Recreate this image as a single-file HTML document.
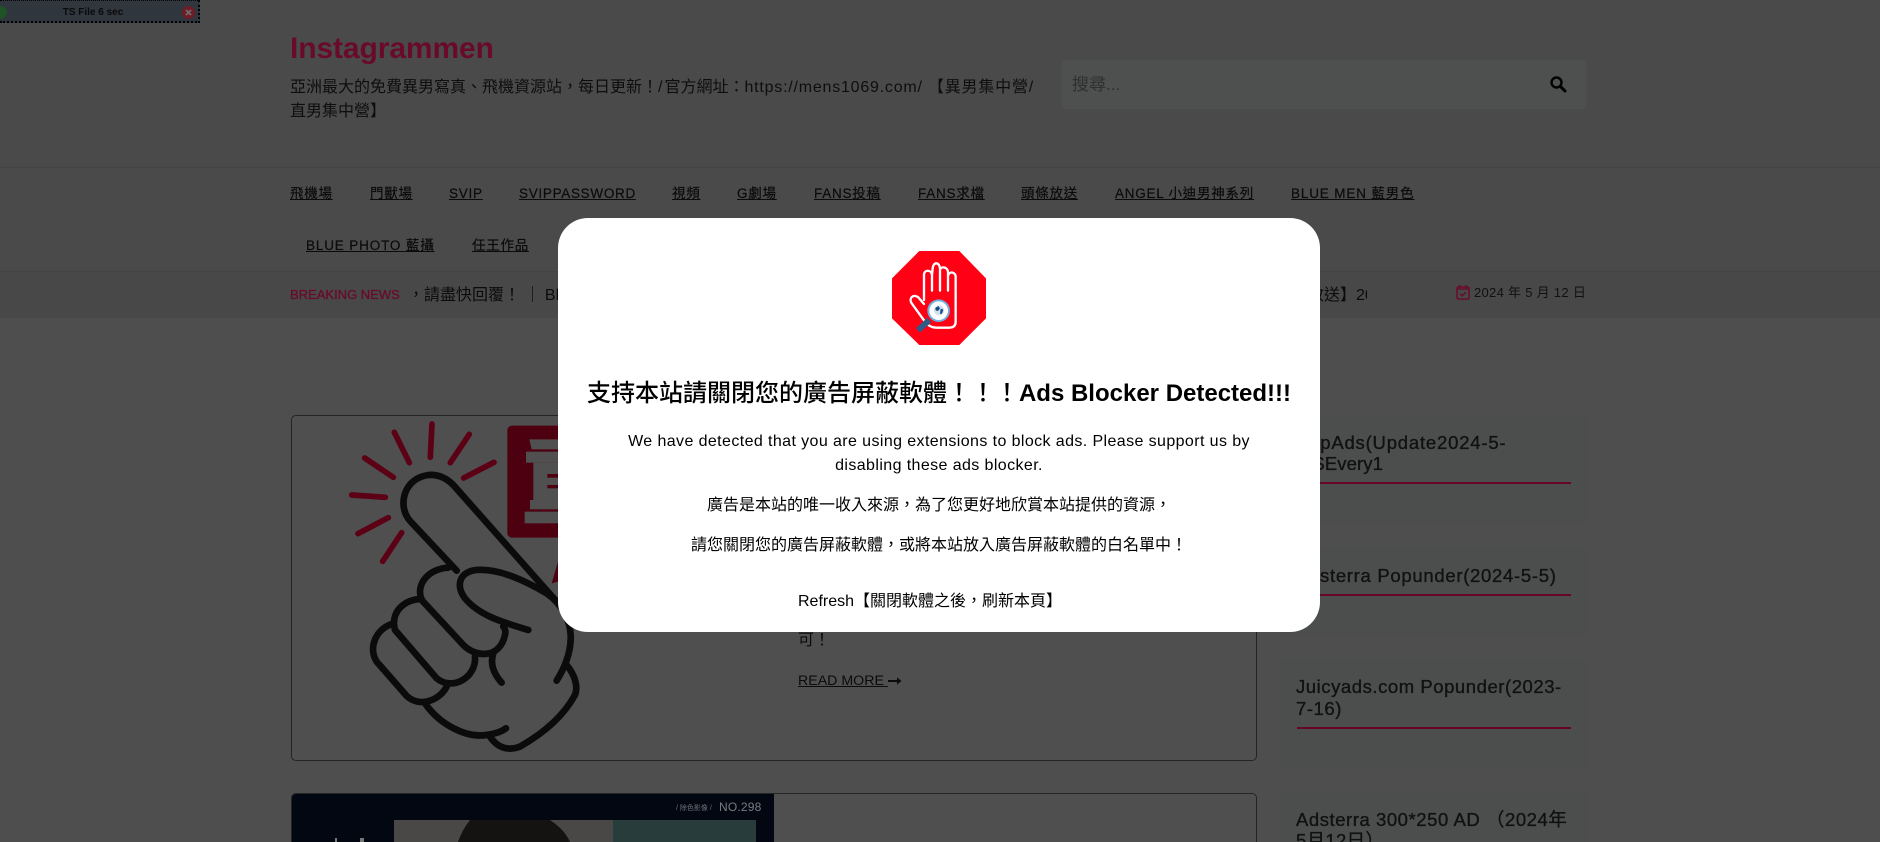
<!DOCTYPE html>
<html lang="zh-Hant"><head><meta charset="utf-8"><title>Instagrammen</title>
<style>
*{box-sizing:border-box}
html,body{margin:0;padding:0;width:1880px;height:842px;overflow:hidden;background:#4d4e4d}
body{position:relative;font-family:"Liberation Sans","Noto Sans CJK TC",sans-serif;color:#0b0b0b}
.a{position:absolute;white-space:nowrap}
.n{position:absolute;white-space:nowrap;font-size:13.5px;line-height:18px;letter-spacing:.75px;text-decoration:underline;color:#0b0b0b;-webkit-text-stroke:.2px #0b0b0b}
.w{position:absolute;background:#4c4e4d;left:1281px;width:306px}
.t{position:absolute;white-space:nowrap;font-size:18.5px;line-height:21px;color:#111;letter-spacing:.55px;-webkit-text-stroke:.35px #111}
.u{position:absolute;height:2px;background:#660524;left:1297px;width:274px}
#m{position:absolute;left:558px;top:218px;width:762px;height:414px;background:#fff;border-radius:30px;color:#000;text-align:center}
#m div{position:absolute;left:0;width:100%;white-space:nowrap;font-size:16px;line-height:24px}
</style></head><body>
<div class="a" style="left:0;top:0;width:1880px;height:167px;background:#4a4a4a"></div>
<div class="a" style="left:0;top:167px;width:1880px;height:104px;background:#4a4a4a;border-top:1px solid #444"></div>
<div class="a" style="left:0;top:271px;width:1880px;height:47px;background:#484848;border-top:1px solid #444"></div>

<div class="a" style="left:0;top:0;width:200px;height:23px;background:#30363d;border:2px dotted #000;border-width:1px 2px 2px 0;text-align:center;font-size:10px;font-weight:bold;line-height:23px;padding-right:12px;color:#0a0a0a">TS File 6 sec</div>
<div class="a" style="left:-7px;top:6px;width:14px;height:13px;border-radius:50%;background:#1f5227"></div>
<svg class="a" style="left:182px;top:6px" width="13" height="13" viewBox="0 0 13 13"><circle cx="6.5" cy="6.5" r="6.5" fill="#6e1c26"/><path d="M4 4l5 5M9 4l-5 5" stroke="#6d6d6d" stroke-width="1.8"/></svg>

<div class="a" style="left:290px;top:29px;font-size:30px;line-height:40px;font-weight:bold;color:#6a0a2b;letter-spacing:-.1px">Instagrammen</div>
<div class="a" style="left:290px;top:76px;font-size:16px;line-height:24px;color:#0e0e0e">亞洲最大的免費異男寫真、飛機資源站，每日更新！<span style="letter-spacing:2px">/</span>官方網址：<span style="letter-spacing:.78px">https://mens1069.com/ </span><span style="letter-spacing:.8px">【異男集中營/</span><br>直男集中營】</div>
<div class="a" style="left:1061px;top:60px;width:526px;height:49px;background:#4d504e;border-radius:5px"></div>
<div class="a" style="left:1072px;top:73px;font-size:17px;line-height:24px;color:#2f302f">搜尋...</div>
<svg class="a" style="left:1549px;top:75px" width="18" height="18" viewBox="0 0 18 18"><circle cx="7.5" cy="7.5" r="5" fill="none" stroke="#000" stroke-width="2.4"/><path d="M11.3 11.3L16 16" stroke="#000" stroke-width="3" stroke-linecap="round"/></svg>

<a class="n" style="left:290px;top:185px">飛機場</a>
<a class="n" style="left:370px;top:185px">門獸場</a>
<a class="n" style="left:449px;top:185px">SVIP</a>
<a class="n" style="left:519px;top:185px;letter-spacing:.7px">SVIPPASSWORD</a>
<a class="n" style="left:672px;top:185px">視頻</a>
<a class="n" style="left:737px;top:185px">G劇場</a>
<a class="n" style="left:814px;top:185px">FANS投稿</a>
<a class="n" style="left:918px;top:185px">FANS求檔</a>
<a class="n" style="left:1021px;top:185px">頭條放送</a>
<a class="n" style="left:1115px;top:185px">ANGEL 小迪男神系列</a>
<a class="n" style="left:1291px;top:185px;letter-spacing:.85px">BLUE MEN 藍男色</a>
<a class="n" style="left:306px;top:237px;letter-spacing:.85px">BLUE PHOTO 藍攝</a>
<a class="n" style="left:472px;top:237px">任王作品</a>

<div class="a" style="left:290px;top:286px;font-size:13px;line-height:18px;color:#6a0a2b;-webkit-text-stroke:.3px #6a0a2b">BREAKING NEWS</div>
<div class="a" style="left:408px;top:284px;font-size:16px;line-height:24px">，請盡快回覆！ ｜ Blue</div>
<div class="a" style="left:1320px;top:284px;width:47px;height:24px;overflow:hidden;font-size:16px;line-height:24px;text-indent:-12px">放送】2024</div>
<svg class="a" style="left:1456px;top:284px" width="14" height="16" viewBox="0 0 14 16"><rect x="1" y="3" width="12" height="12" rx="1.5" fill="none" stroke="#6a0a2b" stroke-width="1.5"/><path d="M1 5h12" stroke="#6a0a2b" stroke-width="1.4"/><path d="M4 1v3M10 1v3" stroke="#6a0a2b" stroke-width="1.6"/><path d="M4.2 9.8l2 2 3.6-3.6" fill="none" stroke="#6a0a2b" stroke-width="1.5"/></svg>
<div class="a" style="left:1474px;top:284px;font-size:13px;line-height:17px;letter-spacing:.3px;color:#111">2024 年 5 月 12 日</div>

<!-- cards -->
<div class="a" style="left:291px;top:415px;width:966px;height:346px;border:1px solid #242424;border-radius:5px;background:#4f4f4f"></div>
<div class="a" style="left:291px;top:793px;width:966px;height:60px;border:1px solid #242424;border-radius:5px;background:#4f4f4f"></div>

<svg class="a" style="left:0;top:0" width="1880" height="842" viewBox="0 0 1880 842">
<g transform="translate(490 410) scale(.3333)">
<rect x="52" y="47" width="180" height="336" rx="14" fill="#4c0010"/>
<path d="M118 88H232V118H125Z" fill="#505050"/>
<rect x="108" y="125" width="124" height="33" fill="#505050"/>
<rect x="130" y="158" width="102" height="112" fill="#505050"/>
<rect x="172" y="192" width="60" height="11" fill="#4c0010"/>
<rect x="172" y="225" width="60" height="10" fill="#4c0010"/>
<rect x="120" y="270" width="112" height="28" fill="#505050"/>
<rect x="104" y="305" width="128" height="35" fill="#505050"/>
<path d="M185 520L204 455V515Z" fill="#4c0010"/>
</g>
<g transform="translate(280 400) scale(.3333)" fill="none" stroke-linecap="round" stroke-linejoin="round">
<g stroke="#5c0015" stroke-width="17">
<path d="M456 72L451 172M343 97L388 188M568 103L511 188M642 187L551 234M254 174L340 232M215 285L316 292M325 353L234 401M365 398L308 484"/>
</g>
<g stroke="#0c0b0b" stroke-width="20">
<path d="M530 512L392 365C350 320 370 235 445 225C480 222 505 240 520 255L830 605"/>
<path d="M745 690C680 670 600 650 555 595C525 555 540 515 590 510C660 505 740 545 800 580C850 615 875 670 872 720C870 770 850 810 830 842"/>
<path d="M505 503C450 505 405 550 425 600L550 735C590 775 660 775 675 705C678 695 675 685 670 680"/>
<path d="M425 597C375 597 330 635 345 690L470 835C520 875 590 830 585 770"/>
<path d="M335 672C285 690 265 745 290 785L380 888C420 925 480 900 500 860"/>
<path d="M640 760C630 790 640 820 665 848"/>
<path d="M435 910C480 975 560 1015 620 1005C650 1000 665 995 678 985"/>
<path d="M630 1010C650 1040 680 1055 720 1040C790 1000 850 950 885 885C895 860 885 825 860 795"/>
</g>
</g>
</svg>

<div class="a" style="left:798px;top:629px;font-size:16px;line-height:24px">可！</div>
<div class="a" style="left:798px;top:671px;font-size:14.2px;line-height:20px"><span style="text-decoration:underline">READ MORE&nbsp;</span></div>
<svg class="a" style="left:888px;top:676px" width="14" height="10" viewBox="0 0 14 10"><path d="M0 5H11" stroke="#0b0b0b" stroke-width="2"/><path d="M9 1.5L13.5 5L9 8.5Z" fill="#0b0b0b"/></svg>

<div class="a" style="left:292px;top:794px;width:482px;height:48px;background:#030712;border-radius:4px 0 0 0"></div>
<div class="a" style="left:394px;top:820px;width:362px;height:22px;background:#4a4846"></div>
<div class="a" style="left:613px;top:820px;width:143px;height:22px;background:#283c3c"></div>
<svg class="a" style="left:450px;top:820px" width="130" height="22" viewBox="0 0 130 22"><path d="M20 0H100Q115 10 120 22H8Q12 10 20 0Z" fill="#141312"/></svg>
<div class="a" style="left:676px;top:804px;font-size:7px;line-height:10px;color:#6f7176">/ 除色影像 /</div>
<div class="a" style="left:719px;top:800px;font-size:12px;line-height:15px;color:#7a7c80;letter-spacing:.2px">NO.298</div>
<div class="a" style="left:335px;top:838px;width:2px;height:4px;background:#777"></div>
<div class="a" style="left:360px;top:838px;width:4px;height:4px;background:#777"></div>

<!-- sidebar -->
<div class="w" style="top:415px;height:108px"></div>
<div class="w" style="top:548px;height:87px"></div>
<div class="w" style="top:660px;height:108px"></div>
<div class="w" style="top:793px;height:49px"></div>
<div class="t" style="left:1296px;top:432px;letter-spacing:.8px">PopAds(Update2024-5-</div>
<div class="t" style="right:497px;top:453px;letter-spacing:.1px">CPMSEvery1</div>
<div class="u" style="top:482px"></div>
<div class="t" style="left:1296px;top:565px;letter-spacing:.7px">Adsterra Popunder(2024-5-5)</div>
<div class="u" style="top:594px"></div>
<div class="t" style="left:1296px;top:676px">Juicyads.com Popunder(2023-</div>
<div class="t" style="left:1296px;top:698px">7-16)</div>
<div class="u" style="top:727px"></div>
<div class="t" style="left:1296px;top:809px">Adsterra 300*250 AD （2024年</div>
<div class="t" style="left:1296px;top:830px;letter-spacing:.3px">5月12日）</div>

<!-- modal -->
<div id="m">
<svg style="position:absolute;left:302px;top:22px" width="160" height="120" viewBox="0 0 480 360">
<path d="M178 33H298L378 115V235L298 315H178L96 235V115Z" fill="#ff0015"/>
<g fill="none" stroke="#fff" stroke-width="7" stroke-linejoin="round" stroke-linecap="round">
<path d="M192 180V105C192 88 214 88 216 105V152M216 105L218 85C220 65 238 65 240 85V152M240 90C242 78 262 80 264 95V152M264 108C266 92 288 95 287 112V245C287 258 280 263 268 263H228C215 263 205 258 195 245L155 190C145 175 160 160 175 172L192 192"/>
</g>
<path d="M208 240L174 271" stroke="#2f5a85" stroke-width="18"/>
<circle cx="236" cy="212" r="31" fill="#fff" stroke="#6fb0e0" stroke-width="6"/>
<circle cx="237" cy="211" r="15" fill="#cfe0ef"/>
<path d="M226 204l9-6 5 7-6 8-7-2zM242 206l8 3-4 12-6 1z" fill="#174a86"/>
</svg>
<div style="top:161px;font-size:24px;line-height:30px;font-weight:500">支持本站請關閉您的廣告屏蔽軟體！！！<b style="font-size:24px">Ads Blocker Detected!!!</b></div>
<div style="top:212px;letter-spacing:.4px">We have detected that you are using extensions to block ads. Please support us by</div>
<div style="top:236px;letter-spacing:.4px">disabling these ads blocker.</div>
<div style="top:276px">廣告是本站的唯一收入來源，為了您更好地欣賞本站提供的資源，</div>
<div style="top:316px">請您關閉您的廣告屏蔽軟體，或將本站放入廣告屏蔽軟體的白名單中！</div>
<div style="top:372px;left:-9px">Refresh【關閉軟體之後，刷新本頁】</div>
</div>
</body></html>
